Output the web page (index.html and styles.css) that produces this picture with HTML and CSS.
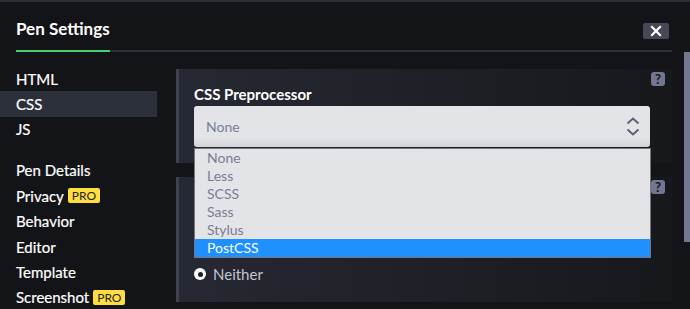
FILE: index.html
```html
<!DOCTYPE html>
<html lang="en">
<head>
<meta charset="utf-8">
<title>Pen Settings</title>
<link rel="stylesheet" href="styles.css">
</head>
<body>
<div class="topstrip"></div>
<header class="header">
  <h1 class="title">Pen Settings</h1>
  <button class="close" aria-label="Close">
    <svg width="12" height="12" viewBox="0 0 12 12"><path d="M2 2 L10 10 M10 2 L2 10" stroke="#fff" stroke-width="2.2" stroke-linecap="square"/></svg>
  </button>
</header>
<div class="content">
  <nav class="sidebar">
    <div class="group">
      <a class="item">HTML</a>
      <a class="item active">CSS</a>
      <a class="item">JS</a>
    </div>
    <div class="group">
      <a class="item">Pen Details</a>
      <a class="item">Privacy <span class="pro">PRO</span></a>
      <a class="item">Behavior</a>
      <a class="item">Editor</a>
      <a class="item">Template</a>
      <a class="item">Screenshot <span class="pro">PRO</span></a>
    </div>
  </nav>
  <main class="main">
    <section class="panel">
      <span class="help">?</span>
      <div class="label">CSS Preprocessor</div>
      <div class="select-wrap">
        <div class="select">
          <span>None</span>
          <svg class="chev" width="14" height="19" viewBox="0 0 14 19"><path d="M1.5 6.5 L7 1.5 L12.5 6.5 M1.5 12.5 L7 17.5 L12.5 12.5" fill="none" stroke="#5d6175" stroke-width="2"/></svg>
        </div>
        <ul class="dropdown">
          <li>None</li>
          <li>Less</li>
          <li>SCSS</li>
          <li>Sass</li>
          <li>Stylus</li>
          <li class="sel">PostCSS</li>
        </ul>
      </div>
    </section>
    <section class="panel panel2">
      <span class="help">?</span>
      <div class="radio-row"><span class="radio checked"></span>Neither</div>
    </section>
  </main>
  <div class="scrolltrack"><div class="thumb"></div></div>
</div>
</body>
</html>
```
FILE: styles.css
```css
* { box-sizing: border-box; }
html, body { margin: 0; padding: 0; }
body {
  width: 690px;
  height: 309px;
  overflow: hidden;
  background: #131417;
  color: #fff;
  font-family: Lato, "Liberation Sans", sans-serif;
}
.topstrip { height: 2px; background: #2b2d35; }
.header {
  display: flex;
  justify-content: space-between;
  margin: 0 18px 0 16px;
  border-bottom: 2px solid #2c2f38;
}
.title {
  margin: 0 0 -2px 0;
  padding: 17px 0 11px;
  font-size: 17px;
  line-height: 20px;
  font-weight: 700;
  border-bottom: 2px solid #47cf73;
}
.close {
  align-self: flex-start;
  margin: 21px 3px 0 0;
  width: 26px;
  height: 16px;
  padding: 0;
  border: 0;
  border-radius: 2px;
  background: #444857;
  display: flex;
  align-items: center;
  justify-content: center;
}
.content { display: flex; height: 257px; }
.sidebar { width: 157px; flex: none; padding-top: 14px; }
.group + .group { margin-top: 15.5px; }
.item {
  display: flex;
  align-items: center;
  height: 25.4px;
  padding-left: 16px;
  font-size: 15px;
  color: #fff;
  -webkit-text-stroke: 0.2px #fff;
}
.item.active { background: #2c303a; }
.pro {
  margin-left: 4px;
  height: 15px;
  padding: 0 4px;
  border-radius: 2px;
  background: #ffdd40;
  color: #1e1f26;
  font-size: 12px;
  line-height: 15px;
  -webkit-text-stroke: 0;
}
.main { flex: 1; margin: 17px 12px 0 19px; }
.panel {
  position: relative;
  border-left: 3px solid #3d404d;
  background: linear-gradient(to right, #262933, #17181c);
  padding: 16px 22px 16px 15px;
}
.panel2 { margin-top: 14px; padding-top: 85px; }
.help {
  position: absolute;
  top: 3px;
  right: 7px;
  width: 14px;
  height: 14px;
  border-radius: 3px;
  background: #717790;
  color: #131417;
  font-size: 13px;
  font-weight: 700;
  line-height: 14px;
  text-align: center;
}
.label {
  font-size: 15px;
  font-weight: 700;
  line-height: 18px;
  margin-bottom: 3px;
}
.select-wrap { position: relative; }
.select {
  display: flex;
  align-items: center;
  justify-content: space-between;
  height: 41px;
  padding: 0 10px 0 12px;
  border-radius: 3px;
  background: linear-gradient(#e3e4e8 75%, #d3d4d9);
  color: #7a7e93;
  font-size: 14px;
}
.dropdown {
  position: absolute;
  z-index: 10;
  top: 42px;
  left: 0;
  width: calc(100% + 1px);
  margin: 0;
  padding: 0;
  list-style: none;
  border: 1px solid #777;
  background: #e3e4e8;
}
.dropdown li {
  height: 18px;
  line-height: 18px;
  padding-left: 12px;
  font-size: 14px;
  color: #7a7d92;
}
.dropdown li.sel { background: #1e90ff; color: #fff; }
.radio-row {
  display: flex;
  align-items: center;
  height: 24px;
  font-size: 15px;
  color: #c4c5cc;
}
.radio {
  width: 12px;
  height: 12px;
  border-radius: 50%;
  background: #fff;
  margin-right: 7px;
  display: flex;
  align-items: center;
  justify-content: center;
}
.radio.checked::after {
  content: "";
  width: 5px;
  height: 5px;
  border-radius: 50%;
  background: #1e1f26;
}
.scrolltrack { width: 6px; flex: none; }
.thumb { height: 190px; background: #717790; }
```
